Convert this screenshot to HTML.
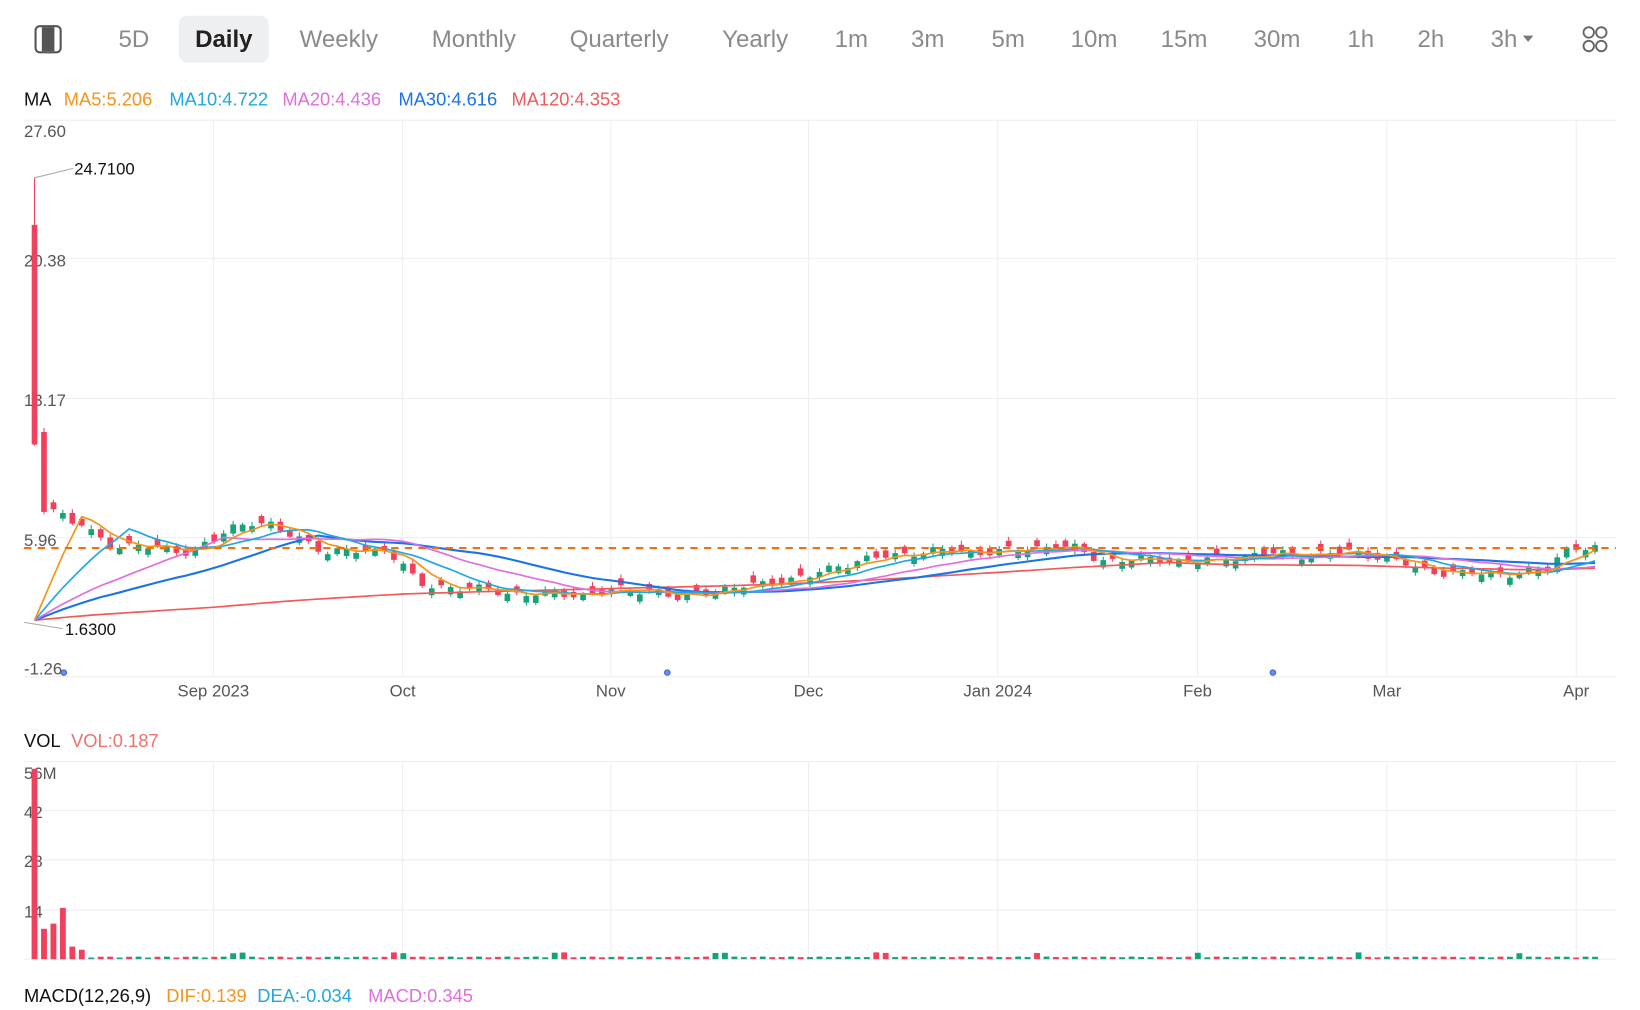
<!DOCTYPE html>
<html><head><meta charset="utf-8"><style>
html,body{margin:0;padding:0;background:#fff;width:1640px;height:1010px;overflow:hidden}
svg{display:block;font-family:"Liberation Sans",sans-serif}
</style></head><body>
<svg id="s" width="1640" height="1010" viewBox="0 0 1568 965.6" preserveAspectRatio="none" xmlns="http://www.w3.org/2000/svg">
<rect width="1568" height="966" fill="#fff"/>
<rect x="34" y="25" width="24" height="25" rx="4" fill="none" stroke="#555" stroke-width="2"/>
<rect x="40" y="26" width="12" height="23" fill="#555"/>
<rect x="171" y="15" width="86" height="45" rx="8" fill="#eeeff1"/>
<g font-size="23" fill="#8a8a8a" text-anchor="middle">
<text x="128" y="45">5D</text>
<text x="214" y="45" fill="#222" font-weight="bold">Daily</text>
<text x="324" y="45">Weekly</text>
<text x="453" y="45">Monthly</text>
<text x="592" y="45">Quarterly</text>
<text x="722" y="45">Yearly</text>
<text x="814" y="45">1m</text>
<text x="887" y="45">3m</text>
<text x="964" y="45">5m</text>
<text x="1046" y="45">10m</text>
<text x="1132" y="45">15m</text>
<text x="1221" y="45">30m</text>
<text x="1301" y="45">1h</text>
<text x="1368" y="45">2h</text>
<text x="1438" y="45">3h</text>
</g>
<path d="M1456 34h10l-5 6z" fill="#777"/>
<g fill="none" stroke="#666" stroke-width="1.8">
<circle cx="1519" cy="31" r="5"/><circle cx="1531" cy="31" r="5"/><circle cx="1519" cy="44" r="5"/><circle cx="1531" cy="44" r="5"/>
</g>
<text y="101" font-size="17.5"><tspan x="23" fill="#111">MA</tspan><tspan x="61" fill="#f7931a">MA5:5.206</tspan><tspan x="162" fill="#1fa8e0">MA10:4.722</tspan><tspan x="270" fill="#e06ee0">MA20:4.436</tspan><tspan x="381" fill="#1a73e8">MA30:4.616</tspan><tspan x="489" fill="#f05a5a">MA120:4.353</tspan></text>
<g stroke="#eeeeee" stroke-width="1" id="grid"></g>
<g font-size="16" fill="#555">
<text x="23" y="131">27.60</text><text x="23" y="255">20.38</text><text x="23" y="388">13.17</text><text x="23" y="522">5.96</text><text x="23" y="645">-1.26</text>
</g>
<g font-size="16" fill="#555" text-anchor="middle">
<text x="204" y="666">Sep 2023</text><text x="385" y="666">Oct</text><text x="584" y="666">Nov</text><text x="773" y="666">Dec</text><text x="954" y="666">Jan 2024</text><text x="1145" y="666">Feb</text><text x="1326" y="666">Mar</text><text x="1507" y="666">Apr</text>
</g>
<g id="chart"></g>
<line x1="23" y1="524" x2="1545" y2="524" stroke="#f07010" stroke-width="2" stroke-dasharray="7,6"/>
<path d="M33 170L70 161" stroke="#aaa" fill="none"/><text x="71" y="167" font-size="16" fill="#111">24.7100</text>
<path d="M23 595L60 601" stroke="#aaa" fill="none"/><text x="62" y="607" font-size="16" fill="#111">1.6300</text>
<g fill="#6d8ef0" stroke="#3a60d8" stroke-width="1"><circle cx="61" cy="643" r="2.6"/><circle cx="638" cy="643" r="2.6"/><circle cx="1217" cy="643" r="2.6"/></g>
<text y="714" font-size="17.5"><tspan x="23" fill="#111">VOL</tspan><tspan x="68" fill="#f07070">VOL:0.187</tspan></text>
<g font-size="16" fill="#555"><text x="23" y="745">56M</text><text x="23" y="782">42</text><text x="23" y="829">28</text><text x="23" y="877">14</text></g>
<g id="vol"></g>
<text y="958" font-size="17.5"><tspan x="23" fill="#111">MACD(12,26,9)</tspan><tspan x="159" fill="#f7931a">DIF:0.139</tspan><tspan x="246" fill="#1fa8e0">DEA:-0.034</tspan><tspan x="352" fill="#e06ee0">MACD:0.345</tspan></text>
</svg>
<script>
(function(){
var NS="http://www.w3.org/2000/svg";
function el(p,t,a){var e=document.createElementNS(NS,t);for(var k in a)e.setAttribute(k,a[k]);p.appendChild(e);return e;}
var g=document.getElementById('grid');
[115,247,381,514,647,728,775,822,870,917].forEach(function(y){el(g,'line',{x1:23,x2:1545,y1:y,y2:y});});
[204,385,584,773,954,1145,1326,1507].forEach(function(x){el(g,'line',{x1:x,x2:x,y1:115,y2:647});el(g,'line',{x1:x,x2:x,y1:728,y2:917});});
var pts=[[33,425],[41,490],[50,485],[58,490],[67,500],[76,500],[85,508],[95,515],[105,520],[130,522],[160,525],[180,527],[204,518],[220,505],[240,498],[255,500],[270,510],[290,515],[310,527],[330,528],[370,525],[385,540],[400,560],[420,560],[450,563],[500,568],[560,568],[600,563],[630,565],[650,575],[670,565],[700,563],[740,556],[773,552],[800,540],[830,535],[870,528],[900,527],[954,528],[1000,522],[1030,525],[1050,535],[1100,535],[1145,537],[1200,530],[1250,530],[1300,528],[1330,535],[1360,545],[1400,549],[1440,548],[1480,545],[1495,525],[1505,522],[1525,525]];
function interp(x){for(var i=1;i<pts.length;i++){if(x<=pts[i][0]){var a=pts[i-1],b=pts[i];return a[1]+(b[1]-a[1])*(x-a[0])/(b[0]-a[0]);}}return pts[pts.length-1][1];}
var N=166,xs=[],cl=[],op=[];
for(var i=0;i<N;i++){var x=33+i*(1492/(N-1));xs.push(x);var c=interp(x);if(i>1)c+=3*Math.sin(i*1.7)+2*Math.sin(i*0.9);cl.push(c);}
var ch=document.getElementById('chart');
for(var i=0;i<N;i++){
 var c=cl[i];
 var o;
 if(i==0)o=215;else if(i==1)o=413;else{var d=cl[i-1]-c;if(Math.abs(d)<5)d=(Math.sin(i*2.3)>0?1:-1)*(5+2*Math.abs(Math.sin(i*1.1)));o=c+d;}
 op.push(o);
 var up=c<o,col=up?'#16a37a':'#f0405e';
 var bt=Math.min(o,c),bb=Math.max(o,c);
 var wt=i==0?170:bt-1-3*Math.abs(Math.sin(i*1.3)),wb=bb+1+2*Math.abs(Math.sin(i*0.7));
 el(ch,'line',{x1:xs[i],x2:xs[i],y1:wt,y2:wb,stroke:col,'stroke-width':1});
 el(ch,'rect',{x:xs[i]-2.7,y:bt,width:5.4,height:bb-bt,fill:col});
}
function ma(n,col,w){var d='';for(var i=0;i<N;i++){var s=0;for(var k=i-n+1;k<=i;k++)s+=(k<=0?593:cl[k]);var v=s/n;d+=(i?'L':'M')+xs[i].toFixed(1)+' '+v.toFixed(1);}el(ch,'path',{d:d,fill:'none',stroke:col,'stroke-width':w});}
ma(120,'#f05a5a',1.6);ma(30,'#1a73e8',2);ma(20,'#e06ee0',1.6);ma(10,'#1fa8e0',1.6);ma(5,'#f7931a',1.6);
var vg=document.getElementById('vol');
var vh={0:182,1:29,2:34,3:49,4:12,5:9};
for(var i=0;i<N;i++){var up=i<5?false:cl[i]<op[i];var h=vh[i]!==undefined?vh[i]:(1.5+1*Math.abs(Math.sin(i*2.1))+(Math.sin(i*0.37)>0.95?4:0));
 el(vg,'rect',{x:xs[i]-2.8,y:917-h,width:5.6,height:h,fill:up?'#16a37a':'#f0405e'});}
})();
</script>
</body></html>
